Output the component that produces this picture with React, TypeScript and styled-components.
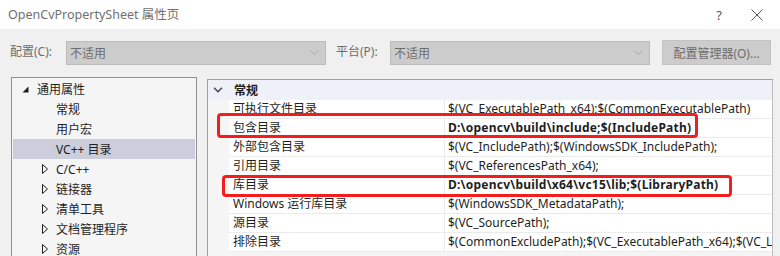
import React from "react";
import styled, { createGlobalStyle } from "styled-components";

const Global = createGlobalStyle`
  html, body { margin: 0; padding: 0; background: #f0f0f0; }
  body { font-family: "Segoe UI", "Noto Sans", "Noto Sans CJK SC", sans-serif; font-size: 12px; color: #1e1e1e; }
`;

const FONT = `"Noto Sans", "Noto Sans CJK SC", sans-serif`;

const Window = styled.div`
  position: relative;
  width: 780px;
  height: 256px;
  overflow: hidden;
  display: flex;
  flex-direction: column;
  background: #f0f0f0;
  font-family: ${FONT};
`;

const TitleBar = styled.div`
  height: 29px;
  flex: none;
  background: #ffffff;
  display: flex;
  align-items: center;
  padding-left: 8px;
`;

const Title = styled.div`
  flex: 1;
  font-size: 12.5px;
  color: #707070;
  white-space: nowrap;
  margin-top: -2px;
`;

const TitleButton = styled.div<{ $w: number }>`
  width: ${(p) => p.$w}px;
  height: 29px;
  display: flex;
  align-items: center;
  justify-content: center;
  color: #555;
  font-size: 13px;
`;

const ConfigRow = styled.div`
  height: 48px;
  flex: none;
  display: flex;
  align-items: flex-start;
  padding: 11px 0 0 10px;
  box-sizing: border-box;
`;

const Label = styled.div<{ $w: number }>`
  width: ${(p) => p.$w}px;
  height: 25px;
  line-height: 24px;
  color: #6d6d6d;
  white-space: nowrap;
`;

const Combo = styled.div<{ $w: number; $gap: number }>`
  width: ${(p) => p.$w}px;
  height: 24px;
  margin-top: 1px;
  margin-right: ${(p) => p.$gap}px;
  box-sizing: border-box;
  background: #cccccc;
  border: 1px solid #bcbcbc;
  display: flex;
  align-items: center;
  padding: 0 6px 0 3px;
  color: #6d6d6d;
  justify-content: space-between;
`;

const Button = styled.div`
  width: 109px;
  height: 25px;
  box-sizing: border-box;
  background: #cccccc;
  border: 1px solid #c3c3c3;
  display: flex;
  align-items: center;
  justify-content: center;
  color: #6d6d6d;
  white-space: nowrap;
`;

const Panels = styled.div`
  flex: 1;
  display: flex;
  align-items: flex-start;
  padding-left: 11px;
`;

const Tree = styled.div`
  width: 186px;
  height: 200px;
  box-sizing: border-box;
  border: 1px solid #8f8f8f;
  background: #f5f5f5;
  padding: 1px 1px 0 1px;
  flex: none;
`;

const TreeRow = styled.div<{ $indent: number; $selected?: boolean }>`
  height: 20px;
  display: flex;
  align-items: center;
  background: ${(p) => (p.$selected ? "#cccedb" : "transparent")};
  padding-left: ${(p) => p.$indent}px;
  white-space: nowrap;
  color: #1e1e1e;
`;

const Arrow = styled.span<{ $w: number }>`
  width: ${(p) => p.$w}px;
  display: inline-flex;
  align-items: center;
`;

const Grid = styled.div`
  margin-left: 10px;
  margin-top: 2px;
  width: 566px;
  height: 200px;
  box-sizing: border-box;
  border: 1px solid #a0a0a0;
  border-right-color: #bdbdbd;
  background: #f5f5f5;
  flex: none;
`;

const Category = styled.div`
  height: 20px;
  display: flex;
  align-items: center;
  background: #eef1f8;
  padding-left: 5px;
`;

const CatTitle = styled.span`
  font-weight: 700;
  margin-left: 11px;
`;

const PropRow = styled.div`
  height: 19px;
  margin-left: 21px;
  display: grid;
  grid-template-columns: 215px 1fr;
  background: #ffffff;
  border-bottom: 1px solid #ebebeb;
  box-sizing: border-box;
`;

const Cell = styled.div<{ $bold?: boolean; $value?: boolean }>`
  line-height: 18px;
  padding-left: ${(p) => (p.$value ? 3 : 4)}px;
  font-weight: ${(p) => (p.$bold ? 700 : 400)};
  letter-spacing: ${(p) => (p.$bold ? "0.22px" : "0")};
  white-space: nowrap;
  overflow: hidden;
  border-left: ${(p) => (p.$value ? "1px solid #ebebeb" : "none")};
  color: #1e1e1e;
`;

const Highlight = styled.div<{ $x: number; $y: number; $w: number; $h: number }>`
  position: absolute;
  left: ${(p) => p.$x}px;
  top: ${(p) => p.$y}px;
  width: ${(p) => p.$w}px;
  height: ${(p) => p.$h}px;
  box-sizing: border-box;
  border: 3px solid #f51c1c;
  border-radius: 4px;
  pointer-events: none;
`;

const Chevron = () => (
  <svg width="9" height="6" viewBox="0 0 9 6">
    <polyline points="0.5,0.5 4.5,4.5 8.5,0.5" fill="none" stroke="#a8a8a8" strokeWidth="1" />
  </svg>
);

const Expanded = () => (
  <svg width="7" height="7" viewBox="0 0 7 7">
    <polygon points="6.5,0.5 6.5,6.5 0.5,6.5" fill="#1e1e1e" />
  </svg>
);

const Collapsed = () => (
  <svg width="6" height="10" viewBox="0 0 6 10">
    <polygon points="0.5,0.5 5.5,5 0.5,9.5" fill="none" stroke="#1e1e1e" strokeWidth="1" />
  </svg>
);

const CatChevron = () => (
  <svg width="10" height="6" viewBox="0 0 10 6">
    <polyline points="1,0.8 5,4.8 9,0.8" fill="none" stroke="#444" strokeWidth="1.4" />
  </svg>
);

const treeItems: { label: string; level: number; kind: "exp" | "col" | "leaf"; selected?: boolean }[] = [
  { label: "通用属性", level: 0, kind: "exp" },
  { label: "常规", level: 1, kind: "leaf" },
  { label: "用户宏", level: 1, kind: "leaf" },
  { label: "VC++ 目录", level: 1, kind: "leaf", selected: true },
  { label: "C/C++", level: 1, kind: "col" },
  { label: "链接器", level: 1, kind: "col" },
  { label: "清单工具", level: 1, kind: "col" },
  { label: "文档管理程序", level: 1, kind: "col" },
  { label: "资源", level: 1, kind: "col" },
];

const props: { name: string; value: string; bold?: boolean }[] = [
  { name: "可执行文件目录", value: "$(VC_ExecutablePath_x64);$(CommonExecutablePath)" },
  { name: "包含目录", value: "D:\\opencv\\build\\include;$(IncludePath)", bold: true },
  { name: "外部包含目录", value: "$(VC_IncludePath);$(WindowsSDK_IncludePath);" },
  { name: "引用目录", value: "$(VC_ReferencesPath_x64);" },
  { name: "库目录", value: "D:\\opencv\\build\\x64\\vc15\\lib;$(LibraryPath)", bold: true },
  { name: "Windows 运行库目录", value: "$(WindowsSDK_MetadataPath);" },
  { name: "源目录", value: "$(VC_SourcePath);" },
  { name: "排除目录", value: "$(CommonExcludePath);$(VC_ExecutablePath_x64);$(VC_LibraryPath_x64)" },
];

export default function App() {
  return (
    <>
      <Global />
      <Window>
        <TitleBar>
          <Title>OpenCvPropertySheet 属性页</Title>
          <TitleButton $w={30}>?</TitleButton>
          <TitleButton $w={46}>
            <svg width="12" height="12" viewBox="0 0 12 12">
              <path d="M0.5 0.5 L11.5 11.5 M11.5 0.5 L0.5 11.5" stroke="#555" strokeWidth="1" fill="none" />
            </svg>
          </TitleButton>
        </TitleBar>
        <ConfigRow>
          <Label $w={56}>配置(C):</Label>
          <Combo $w={260} $gap={10}>
            <span>不适用</span>
            <Chevron />
          </Combo>
          <Label $w={54}>平台(P):</Label>
          <Combo $w={260} $gap={12}>
            <span>不适用</span>
            <Chevron />
          </Combo>
          <Button>配置管理器(O)...</Button>
        </ConfigRow>
        <Panels>
          <Tree>
            {treeItems.map((t) => (
              <TreeRow key={t.label} $indent={t.level === 0 ? 9 : 29} $selected={t.selected}>
                <Arrow $w={t.level === 0 ? 15 : 14}>
                  {t.kind === "exp" ? <Expanded /> : t.kind === "col" ? <Collapsed /> : null}
                </Arrow>
                {t.label}
              </TreeRow>
            ))}
          </Tree>
          <Grid>
            <Category>
              <CatChevron />
              <CatTitle>常规</CatTitle>
            </Category>
            {props.map((p) => (
              <PropRow key={p.name}>
                <Cell>{p.name}</Cell>
                <Cell $value $bold={p.bold}>{p.value}</Cell>
              </PropRow>
            ))}
          </Grid>
        </Panels>
        <Highlight $x={217} $y={113} $w={481} $h={25} />
        <Highlight $x={222} $y={175} $w={510} $h={22} />
      </Window>
    </>
  );
}
